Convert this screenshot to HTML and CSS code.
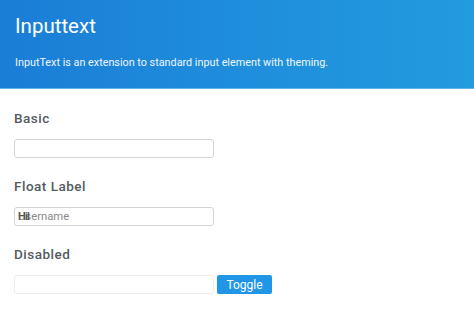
FILE: index.html
```html
<!DOCTYPE html>
<html>
<head>
<meta charset="utf-8">
<link rel="stylesheet" href="styles.css">
</head>
<body>
<header class="intro">
  <h1 class="intro-title">Inputtext</h1>
  <p class="intro-text">InputText is an extension to standard input element with theming.</p>
</header>
<main class="content">
  <section class="demo">
    <h3 class="demo-title">Basic</h3>
    <div class="field"></div>
  </section>
  <section class="demo">
    <h3 class="demo-title">Float Label</h3>
    <div class="field float">
      <span class="float-label">Username</span>
      <span class="float-value">Hil</span>
    </div>
  </section>
  <section class="demo">
    <h3 class="demo-title">Disabled</h3>
    <div class="row">
      <div class="field disabled"></div>
      <button class="btn">Toggle</button>
    </div>
  </section>
</main>
</body>
</html>
```
FILE: styles.css
```css
html, body {
  margin: 0;
  padding: 0;
  background: #ffffff;
  font-family: Roboto, "Liberation Sans", sans-serif;
}
.intro {
  height: 89px;
  box-sizing: border-box;
  padding: 13px 15px 0;
  background: linear-gradient(90deg, #1a7dd6 0%, #1f8fdc 55%, #239bdf 100%);
  color: #ffffff;
  border-bottom: 1px solid #5fb0e8;
}
.intro-title {
  margin: 0;
  font-size: 20.5px;
  font-weight: 400;
  line-height: 26px;
}
.intro-text {
  margin: 17px 0 0;
  font-size: 10.8px;
  line-height: 14px;
  color: #eef6fd;
}
.content {
  padding: 0 14px;
}
.demo {
  display: flex;
  flex-direction: column;
}
.demo-title {
  margin: 0;
  height: 30px;
  padding-top: 19px;
  font-size: 13.5px;
  font-weight: 500;
  letter-spacing: 0.5px;
  line-height: 18px;
  color: #555b61;
  box-sizing: content-box;
}
.demo:first-child .demo-title {
  padding-top: 20px;
}
.field {
  width: 200px;
  height: 19px;
  box-sizing: border-box;
  border: 1px solid #d4d4d4;
  border-radius: 3px;
  background: #ffffff;
}
.field.float {
  position: relative;
  font-size: 11.3px;
  line-height: 17px;
  padding-left: 3px;
}
.float-label {
  color: #8a8a8a;
}
.float-value {
  position: absolute;
  left: 3px;
  top: 0;
  color: #555;
  letter-spacing: -1px;
  font-weight: 500;
}
.field.disabled {
  border-color: #ececec;
}
.row {
  display: flex;
  gap: 3px;
  align-items: center;
}
.btn {
  width: 55px;
  height: 19px;
  padding: 0;
  border: none;
  border-radius: 2px;
  background: #2196e6;
  color: #ffffff;
  font-family: Roboto, "Liberation Sans", sans-serif;
  font-size: 12px;
}
```
